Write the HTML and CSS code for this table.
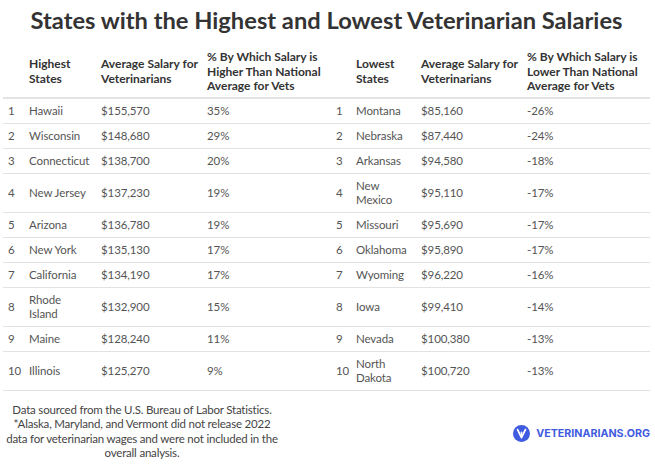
FILE: index.html
```html
<!DOCTYPE html>
<html lang="en">
<head>
<meta charset="utf-8">
<title>States with the Highest and Lowest Veterinarian Salaries</title>
<link rel="stylesheet" href="styles.css">
</head>
<body>
<div class="page">
  <h1 class="title">States with the Highest and Lowest Veterinarian Salaries</h1>
  <table class="salaries">
    <colgroup>
      <col class="c-num"><col class="c-state"><col class="c-sal"><col class="c-pct">
      <col class="c-num2"><col class="c-state2"><col class="c-sal2"><col class="c-pct2">
    </colgroup>
    <thead>
      <tr>
        <th></th><th>Highest States</th><th>Average Salary for Veterinarians</th><th>% By Which Salary is Higher Than National Average for Vets</th>
        <th></th><th>Lowest States</th><th>Average Salary for Veterinarians</th><th>% By Which Salary is Lower Than National Average for Vets</th>
      </tr>
    </thead>
    <tbody>
      <tr><td>1</td><td>Hawaii</td><td>$155,570</td><td>35%</td><td class="n2">1</td><td>Montana</td><td>$85,160</td><td>-26%</td></tr>
      <tr><td>2</td><td>Wisconsin</td><td>$148,680</td><td>29%</td><td class="n2">2</td><td>Nebraska</td><td>$87,440</td><td>-24%</td></tr>
      <tr><td>3</td><td>Connecticut</td><td>$138,700</td><td>20%</td><td class="n2">3</td><td>Arkansas</td><td>$94,580</td><td>-18%</td></tr>
      <tr><td>4</td><td>New Jersey</td><td>$137,230</td><td>19%</td><td class="n2">4</td><td>New Mexico</td><td>$95,110</td><td>-17%</td></tr>
      <tr><td>5</td><td>Arizona</td><td>$136,780</td><td>19%</td><td class="n2">5</td><td>Missouri</td><td>$95,690</td><td>-17%</td></tr>
      <tr><td>6</td><td>New York</td><td>$135,130</td><td>17%</td><td class="n2">6</td><td>Oklahoma</td><td>$95,890</td><td>-17%</td></tr>
      <tr><td>7</td><td>California</td><td>$134,190</td><td>17%</td><td class="n2">7</td><td>Wyoming</td><td>$96,220</td><td>-16%</td></tr>
      <tr><td>8</td><td>Rhode Island</td><td>$132,900</td><td>15%</td><td class="n2">8</td><td>Iowa</td><td>$99,410</td><td>-14%</td></tr>
      <tr><td>9</td><td>Maine</td><td>$128,240</td><td>11%</td><td class="n2">9</td><td>Nevada</td><td>$100,380</td><td>-13%</td></tr>
      <tr><td>10</td><td>Illinois</td><td>$125,270</td><td>9%</td><td class="n2">10</td><td>North Dakota</td><td>$100,720</td><td>-13%</td></tr>
    </tbody>
  </table>
  <div class="footer">
    <p class="source">Data sourced from the U.S. Bureau of Labor Statistics. *Alaska, Maryland, and Vermont did not release 2022 data for veterinarian wages and were not included in the overall analysis.</p>
    <div class="brand">
      <svg class="brand-mark" width="17" height="17" viewBox="0 0 17 17" aria-hidden="true">
        <circle cx="8.5" cy="8.5" r="8.5" fill="#3f5be0"/>
        <path d="M4.6 4.6 L8.5 12.6 L12.4 4.6" fill="none" stroke="#fff" stroke-width="1.8" stroke-linejoin="round" stroke-linecap="round"/>
        <path d="M8.5 7.2 L8.5 10.2" fill="none" stroke="#fff" stroke-width="1.4" stroke-linecap="round"/>
      </svg>
      <span class="brand-name">VETERINARIANS.ORG</span>
    </div>
  </div>
</div>
</body>
</html>
```
FILE: styles.css
```css
html, body {
  margin: 0;
  padding: 0;
  background: #ffffff;
}

body {
  font-family: "Lato", "Open Sans", sans-serif;
  color: #555555;
}

.page {
  width: 655px;
  padding: 0 5px 0 3px;
  box-sizing: border-box;
}

.title {
  margin: 0;
  padding-top: 6px;
  height: 46px;
  box-sizing: border-box;
  text-align: center;
  font-size: 23.7px;
  line-height: 28px;
  font-weight: 700;
  color: #333333;
}

.salaries {
  width: 647px;
  border-collapse: collapse;
  table-layout: fixed;
  font-size: 11.5px;
  letter-spacing: -0.1px;
}

.c-num { width: 23px; }
.c-state { width: 72px; }
.c-sal { width: 106px; }
.c-pct { width: 126px; }
.c-num2 { width: 23px; }
.c-state2 { width: 65px; }
.c-sal2 { width: 106px; }
.c-pct2 { width: 126px; }

.salaries th {
  text-align: left;
  font-size: 12px;
  letter-spacing: 0;
  font-weight: 700;
  color: #333333;
  line-height: 14.5px;
  padding: 4px 3px 3px 3px;
  vertical-align: middle;
  border-bottom: 2px solid #e4e4e4;
}

.salaries td {
  line-height: 14px;
  padding: 5px 3px 5px 3px;
  vertical-align: middle;
  border-bottom: 1px solid #e2e2e2;
}

.salaries td:nth-child(2) {
  padding-right: 8px;
}

.salaries td:first-child,
.salaries td.n2 {
  padding-left: 5px;
  padding-right: 0;
}

.salaries td.n2 {
  padding-left: 6px;
}

.footer {
  display: flex;
  justify-content: space-between;
  align-items: center;
  padding-top: 12px;
}

.source {
  margin: 0;
  width: 278px;
  text-align: center;
  font-size: 11.5px;
  letter-spacing: -0.2px;
  line-height: 14.5px;
  color: #444444;
}

.brand {
  display: flex;
  align-items: center;
  gap: 6px;
  margin-top: 4px;
}

.brand-mark {
  display: block;
}

.brand-name {
  font-family: "Inter", "Lato", sans-serif;
  font-size: 10.7px;
  font-weight: 700;
  color: #3f5be0;
  letter-spacing: 0;
}
```
